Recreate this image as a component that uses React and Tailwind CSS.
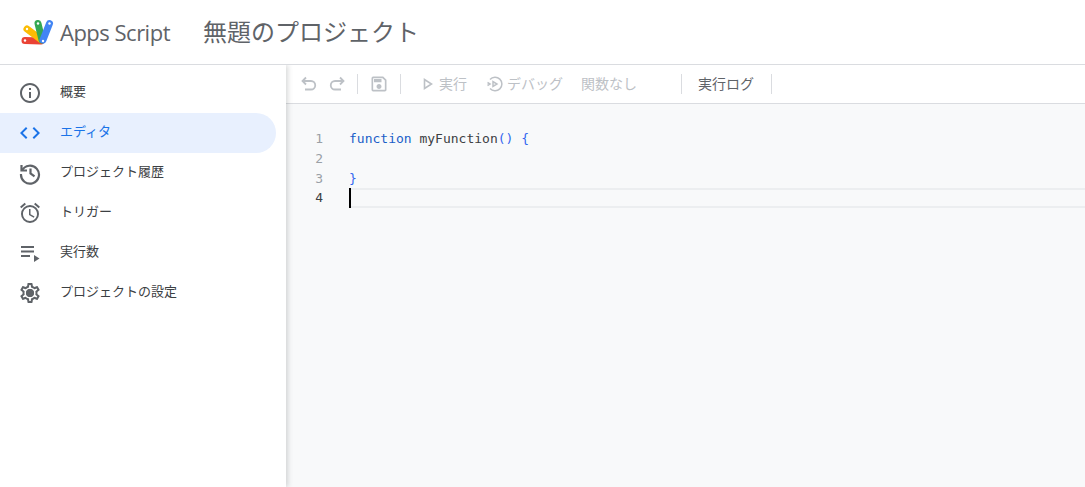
import React from 'react';
import { MdInfoOutline, MdCode, MdOutlineAlarm, MdOutlineSettings, MdOutlineSave } from 'react-icons/md';

const cjk = "font-['Roboto','Noto_Sans_CJK_JP',sans-serif]";

const HistoryIcon = ({ size, className }) => (
  <svg viewBox="0 0 24 24" width={size} height={size} className={className} fill="none" stroke="currentColor" strokeWidth="2.2">
    <path d="M3.5 4v5.5H9" />
    <path d="M4 9.5A9 9 0 1 1 3 13" />
    <path d="M12.5 7.5v5l4 2.8" />
  </svg>
);

const SettingsIcon = ({ size, className }) => (
  <span className={`relative block ${className}`}>
    <MdOutlineSettings size={size} />
    <span className="absolute left-[8px] top-[8px] w-2 h-2 rounded-full bg-current" />
  </span>
);

const ExecutionsIcon = ({ className }) => (
  <svg viewBox="0 0 24 24" width="24" height="24" className={className} fill="currentColor">
    <rect x="3" y="5" width="13" height="2" />
    <rect x="3" y="9.5" width="13" height="2" />
    <rect x="3" y="14" width="9" height="2" />
    <path d="M16 14v7l5.5-3.5z" />
  </svg>
);

const UndoIcon = ({ className }) => (
  <svg viewBox="0 0 18 18" width="18" height="18" className={className} fill="none" stroke="currentColor" strokeWidth="1.8">
    <path d="M6 2.5L2.5 6 6 9.5" />
    <path d="M3 6h8a4 4 0 0 1 0 8.5H5" />
  </svg>
);

const RedoIcon = ({ className }) => (
  <svg viewBox="0 0 18 18" width="18" height="18" className={className} fill="none" stroke="currentColor" strokeWidth="1.8">
    <path d="M12 2.5L15.5 6 12 9.5" />
    <path d="M15 6H7a4 4 0 0 0 0 8.5h6" />
  </svg>
);

const PlayIcon = ({ className }) => (
  <svg viewBox="0 0 18 18" width="18" height="18" className={className} fill="none" stroke="currentColor" strokeWidth="1.6">
    <path d="M5.5 4.5v9l7-4.5z" />
  </svg>
);

const DebugIcon = ({ className }) => (
  <svg viewBox="0 0 18 18" width="18" height="18" className={className} fill="none" stroke="currentColor" strokeWidth="1.5">
    <path d="M4 4.5A6.8 6.8 0 1 1 4 13.5" />
    <path d="M1.5 7.5L4 9 1.5 10.5" />
    <path d="M7 6.5v5l4-2.5z" />
  </svg>
);

const Logo = () => (
  <svg viewBox="0 0 34 28" width="34" height="28" fill="none" strokeWidth="7" strokeLinecap="round">
    <path d="M5 22.5L21 23" stroke="#ea4335" />
    <path d="M7 11L21 21.5" stroke="#fbbc04" />
    <path d="M18 5.5L22 22" stroke="#34a853" />
    <path d="M29.5 5.5L23 22" stroke="#4285f4" />
    <circle cx="5" cy="22.5" r="1.2" fill="#fff" />
    <circle cx="7" cy="11" r="1.2" fill="#fff" />
    <circle cx="18" cy="5.5" r="1.2" fill="#fff" />
    <circle cx="29.5" cy="5.5" r="1.2" fill="#fff" />
    <circle cx="23" cy="23" r="1.2" fill="#fff" />
  </svg>
);

const navItems = [
  { label: '概要', icon: MdInfoOutline },
  { label: 'エディタ', icon: MdCode, active: true },
  { label: 'プロジェクト履歴', icon: HistoryIcon },
  { label: 'トリガー', icon: MdOutlineAlarm },
  { label: '実行数', icon: ExecutionsIcon },
  { label: 'プロジェクトの設定', icon: SettingsIcon },
];

const Divider = ({ className }) => <div className={`w-px h-5 bg-[#dadce0] ${className}`} />;

export default function App() {
  return (
    <div className={`w-[1085px] h-[487px] overflow-hidden bg-white flex flex-col ${cjk}`}>
      {/* Header */}
      <header className="h-[65px] shrink-0 border-b border-[#dadce0] flex items-center relative z-20 bg-white">
        <div className="ml-[20px] mt-[-1px] flex items-center">
          <Logo />
        </div>
        <span className="ml-[6px] text-[22px] tracking-[-0.5px] text-[#5f6368] font-['Open_Sans','Roboto',sans-serif]">Apps Script</span>
        <span className="ml-[33px] -mt-[3px] text-[24px] text-[#5f6368] font-['Noto_Sans_CJK_JP',sans-serif]">無題のプロジェクト</span>
      </header>

      <div className="flex flex-1 min-h-0">
        {/* Sidebar */}
        <nav className="w-[286px] shrink-0 pt-2 pr-[10px] relative z-10 bg-white shadow-[2px_0_5px_rgba(60,64,67,0.2)]">
          {navItems.map((item) => {
            const Icon = item.icon;
            return (
              <div
                key={item.label}
                className={`h-10 flex items-center rounded-r-full ${item.active ? 'bg-[#e8f0fe] text-[#1a73e8]' : 'text-[#5f6368]'}`}
              >
                <Icon size={24} className="ml-[18px] shrink-0" />
                <span className={`ml-[18px] -mt-[2px] text-[13px] ${item.active ? 'text-[#1a73e8]' : 'text-[#3c4043]'}`}>{item.label}</span>
              </div>
            );
          })}
        </nav>

        {/* Main */}
        <main className="flex-1 flex flex-col min-w-0 bg-[#f8f9fa]">
          <div className="h-[39px] shrink-0 bg-white border-b border-[#dadce0] flex items-center text-[14px] text-[#bdc1c6]">
            <UndoIcon className="ml-[14px]" />
            <RedoIcon className="ml-[10px]" />
            <Divider className="ml-[11px]" />
            <MdOutlineSave size={20} className="ml-[11px]" />
            <Divider className="ml-[11px]" />
            <PlayIcon className="ml-[18px]" />
            <span className="ml-[2px]">実行</span>
            <DebugIcon className="ml-[19px]" />
            <span className="ml-[3px]">デバッグ</span>
            <span className="ml-[18px]">関数なし</span>
            <Divider className="ml-[44px]" />
            <span className="ml-[16px] text-[#5f6368]">実行ログ</span>
            <Divider className="ml-[17px]" />
          </div>

          {/* Editor */}
          <div className="pt-[25px] text-[13px] leading-5 font-['DejaVu_Sans_Mono',monospace]">
            <div className="h-5 flex"><span className="w-[37px] text-right text-[#9aa0a6]">1</span><span className="ml-[26px] text-[#3c4043] whitespace-pre"><span className="text-[#1a5ec8]">function</span> myFunction<span className="text-[#3367f0]">() {'{'}</span></span></div>
            <div className="h-5 flex"><span className="w-[37px] text-right text-[#9aa0a6]">2</span></div>
            <div className="h-5 flex"><span className="w-[37px] text-right text-[#9aa0a6]">3</span><span className="ml-[26px] text-[#3367f0]">{'}'}</span></div>
            <div className="h-5 flex mt-[-1px]">
              <span className="w-[37px] text-right text-[#3c4043] leading-5">4</span>
              <div className="ml-[26px] flex-1 h-5 border-y-2 border-[#eceef0]">
                <div className="w-[2px] h-5 -mt-[2px] bg-black" />
              </div>
            </div>
          </div>
        </main>
      </div>
    </div>
  );
}
